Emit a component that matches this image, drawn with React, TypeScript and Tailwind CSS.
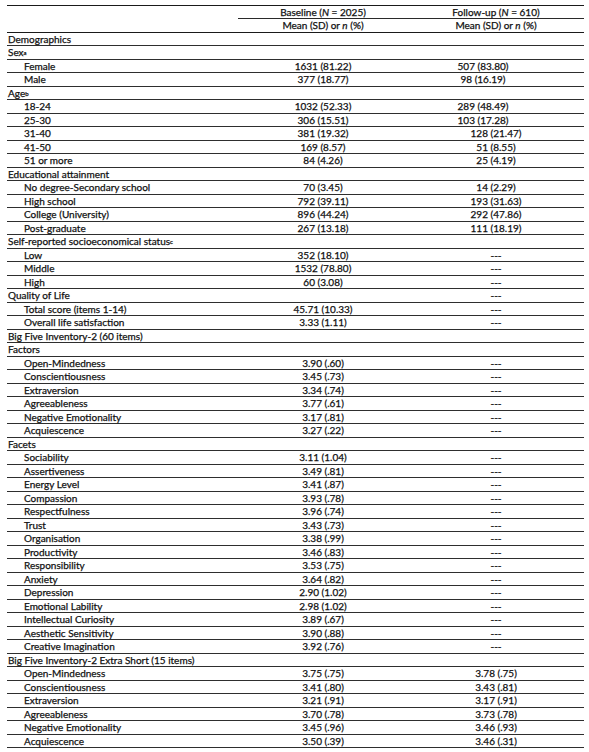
import React from "react";

type Row = { label: string; indent?: boolean; sup?: string; b?: string; f?: string; fShift?: boolean };

const rows: Row[] = [
  { label: "Demographics" },
  { label: "Sex", sup: "a" },
  { label: "Female", indent: true, b: "1631 (81.22)", f: "507 (83.80)", fShift: true },
  { label: "Male", indent: true, b: "377 (18.77)", f: "98 (16.19)", fShift: true },
  { label: "Age", sup: "b" },
  { label: "18-24", indent: true, b: "1032 (52.33)", f: "289 (48.49)", fShift: true },
  { label: "25-30", indent: true, b: "306 (15.51)", f: "103 (17.28)", fShift: true },
  { label: "31-40", indent: true, b: "381 (19.32)", f: "128 (21.47)" },
  { label: "41-50", indent: true, b: "169 (8.57)", f: "51 (8.55)" },
  { label: "51 or more", indent: true, b: "84 (4.26)", f: "25 (4.19)" },
  { label: "Educational attainment" },
  { label: "No degree-Secondary school", indent: true, b: "70 (3.45)", f: "14 (2.29)" },
  { label: "High school", indent: true, b: "792 (39.11)", f: "193 (31.63)" },
  { label: "College (University)", indent: true, b: "896 (44.24)", f: "292 (47.86)" },
  { label: "Post-graduate", indent: true, b: "267 (13.18)", f: "111 (18.19)" },
  { label: "Self-reported socioeconomical status", sup: "c" },
  { label: "Low", indent: true, b: "352 (18.10)", f: "---" },
  { label: "Middle", indent: true, b: "1532 (78.80)", f: "---" },
  { label: "High", indent: true, b: "60 (3.08)", f: "---" },
  { label: "Quality of Life", f: "---" },
  { label: "Total score (items 1-14)", indent: true, b: "45.71 (10.33)", f: "---" },
  { label: "Overall life satisfaction", indent: true, b: "3.33 (1.11)", f: "---" },
  { label: "Big Five Inventory-2 (60 items)" },
  { label: "Factors" },
  { label: "Open-Mindedness", indent: true, b: "3.90 (.60)", f: "---" },
  { label: "Conscientiousness", indent: true, b: "3.45 (.73)", f: "---" },
  { label: "Extraversion", indent: true, b: "3.34 (.74)", f: "---" },
  { label: "Agreeableness", indent: true, b: "3.77 (.61)", f: "---" },
  { label: "Negative Emotionality", indent: true, b: "3.17 (.81)", f: "---" },
  { label: "Acquiescence", indent: true, b: "3.27 (.22)", f: "---" },
  { label: "Facets" },
  { label: "Sociability", indent: true, b: "3.11 (1.04)", f: "---" },
  { label: "Assertiveness", indent: true, b: "3.49 (.81)", f: "---" },
  { label: "Energy Level", indent: true, b: "3.41 (.87)", f: "---" },
  { label: "Compassion", indent: true, b: "3.93 (.78)", f: "---" },
  { label: "Respectfulness", indent: true, b: "3.96 (.74)", f: "---" },
  { label: "Trust", indent: true, b: "3.43 (.73)", f: "---" },
  { label: "Organisation", indent: true, b: "3.38 (.99)", f: "---" },
  { label: "Productivity", indent: true, b: "3.46 (.83)", f: "---" },
  { label: "Responsibility", indent: true, b: "3.53 (.75)", f: "---" },
  { label: "Anxiety", indent: true, b: "3.64 (.82)", f: "---" },
  { label: "Depression", indent: true, b: "2.90 (1.02)", f: "---" },
  { label: "Emotional Lability", indent: true, b: "2.98 (1.02)", f: "---" },
  { label: "Intellectual Curiosity", indent: true, b: "3.89 (.67)", f: "---" },
  { label: "Aesthetic Sensitivity", indent: true, b: "3.90 (.88)", f: "---" },
  { label: "Creative Imagination", indent: true, b: "3.92 (.76)", f: "---" },
  { label: "Big Five Inventory-2 Extra Short (15 items)" },
  { label: "Open-Mindedness", indent: true, b: "3.75 (.75)", f: "3.78 (.75)" },
  { label: "Conscientiousness", indent: true, b: "3.41 (.80)", f: "3.43 (.81)" },
  { label: "Extraversion", indent: true, b: "3.21 (.91)", f: "3.17 (.91)" },
  { label: "Agreeableness", indent: true, b: "3.70 (.78)", f: "3.73 (.78)" },
  { label: "Negative Emotionality", indent: true, b: "3.45 (.96)", f: "3.46 (.93)" },
  { label: "Acquiescence", indent: true, b: "3.50 (.39)", f: "3.46 (.31)" },
];

export default function App() {
  return (
    <div
      className="w-[589px] h-[752px] bg-white text-[#111] overflow-hidden"
      style={{ fontFamily: "Lato, 'Open Sans', sans-serif" }}
    >
      <div className="ml-[7px] mt-[5px] w-[577px] border-t border-[#1a1a1a] text-[10px] leading-[12px] [-webkit-text-stroke:0.25px_#111]">
        <div className="grid grid-cols-[231px_346px] h-[13px]">
          <div />
          <div className="grid grid-cols-[170px_176px] border-b border-[#2a2a2a] items-center">
            <div className="text-center">
              Baseline (<i>N</i> = 2025)
            </div>
            <div className="text-center">
              Follow-up (<i>N</i> = 610)
            </div>
          </div>
        </div>
        <div className="grid grid-cols-[231px_170px_176px] h-[13.5px] border-b border-[#1a1a1a] items-center">
          <div />
          <div className="text-center">
            Mean (SD) or <i>n</i> (%)
          </div>
          <div className="text-center">
            Mean (SD) or <i>n</i> (%)
          </div>
        </div>
        {rows.map((r, i) => (
          <div
            key={i}
            className="grid grid-cols-[231px_170px_176px] h-[13.5px] border-b border-[#2e2e2e] items-center"
          >
            <div className={r.indent ? "pl-[17px]" : "pl-[1px]"}>
              {r.label}
              {r.sup && <sup className="text-[6px] relative top-[-1px]">{r.sup}</sup>}
            </div>
            <div className="text-center">{r.b ?? ""}</div>
            <div className={r.fShift ? "text-center pr-[26px]" : "text-center"}>{r.f ?? ""}</div>
          </div>
        ))}
      </div>
    </div>
  );
}
